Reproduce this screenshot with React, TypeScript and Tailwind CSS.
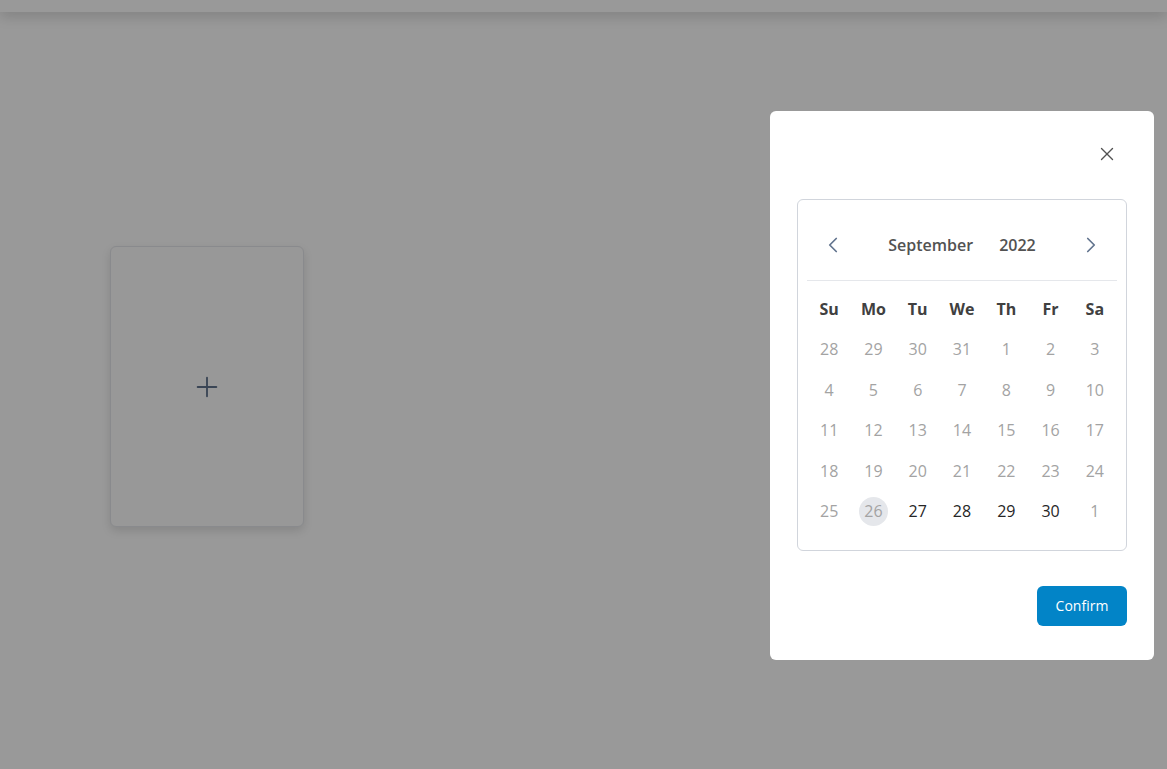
import { ChevronLeft, ChevronRight, Plus, X } from "lucide-react";

const weekdays = ["Su", "Mo", "Tu", "We", "Th", "Fr", "Sa"];

type Day = { label: number; tone: "muted" | "active" | "selected" };

const days: Day[] = [
  ...[28, 29, 30, 31].map((d) => ({ label: d, tone: "muted" as const })),
  ...Array.from({ length: 25 }, (_, i) => ({ label: i + 1, tone: "muted" as const })),
  { label: 26, tone: "selected" },
  ...[27, 28, 29, 30].map((d) => ({ label: d, tone: "active" as const })),
  { label: 1, tone: "muted" },
];

export default function App() {
  return (
    <div className="relative min-h-screen bg-white font-['Open_Sans',sans-serif]">
      {/* Header */}
      <header className="h-3 bg-white shadow-[0_4px_14px_rgba(0,0,0,0.18)]" />

      {/* Content */}
      <main className="px-[110px] pt-[234px]">
        <button className="flex h-[281px] w-[194px] items-center justify-center rounded-md border border-gray-200 bg-[#fdfdfd] text-slate-500 shadow-[0_4px_10px_rgba(0,0,0,0.12)]">
          <Plus size={32} strokeWidth={1.4} />
        </button>
      </main>

      {/* Overlay */}
      <div className="fixed inset-0 flex items-start justify-end bg-black/40 pr-[13px] pt-[111px]">
        <div className="w-[384px] rounded-md bg-white px-[27px] pb-[34px] pt-[32px]">
          <div className="flex justify-end pr-[9px]">
            <button className="text-neutral-600">
              <X size={22} strokeWidth={1.5} />
            </button>
          </div>

          {/* Calendar */}
          <div className="mt-[34px] rounded-md border border-gray-300 px-[9px] pb-[24px] pt-[32px]">
            <div className="flex items-center justify-between px-[13px] pb-[22px]">
              <ChevronLeft size={26} strokeWidth={1.6} className="text-slate-500" />
              <div className="flex items-center gap-[26px] text-[16px] font-semibold text-neutral-600">
                <span>September</span>
                <span>2022</span>
              </div>
              <ChevronRight size={26} strokeWidth={1.6} className="text-slate-500" />
            </div>
            <div className="border-t border-gray-200 pt-[13px]">
              <div className="grid grid-cols-7">
                {weekdays.map((w) => (
                  <div key={w} className="flex h-[29px] items-center justify-center text-[16px] font-bold text-neutral-700">
                    {w}
                  </div>
                ))}
              </div>
              <div className="mt-[11px] grid grid-cols-7 gap-y-[10.5px]">
                {days.map((d, i) => (
                  <div key={i} className="flex h-[30px] items-center justify-center">
                    <span
                      className={
                        d.tone === "selected"
                          ? "flex h-[29px] w-[29px] items-center justify-center rounded-full bg-gray-200 text-[16px] text-[#a3a3a3]"
                          : d.tone === "active"
                          ? "text-[16px] text-neutral-800"
                          : "text-[16px] text-[#a3a3a3]"
                      }
                    >
                      {d.label}
                    </span>
                  </div>
                ))}
              </div>
            </div>
          </div>

          <div className="mt-[35px] flex justify-end">
            <button className="h-10 w-[90px] rounded-md bg-[#0284c7] text-sm text-white">
              Confirm
            </button>
          </div>
        </div>
      </div>
    </div>
  );
}
